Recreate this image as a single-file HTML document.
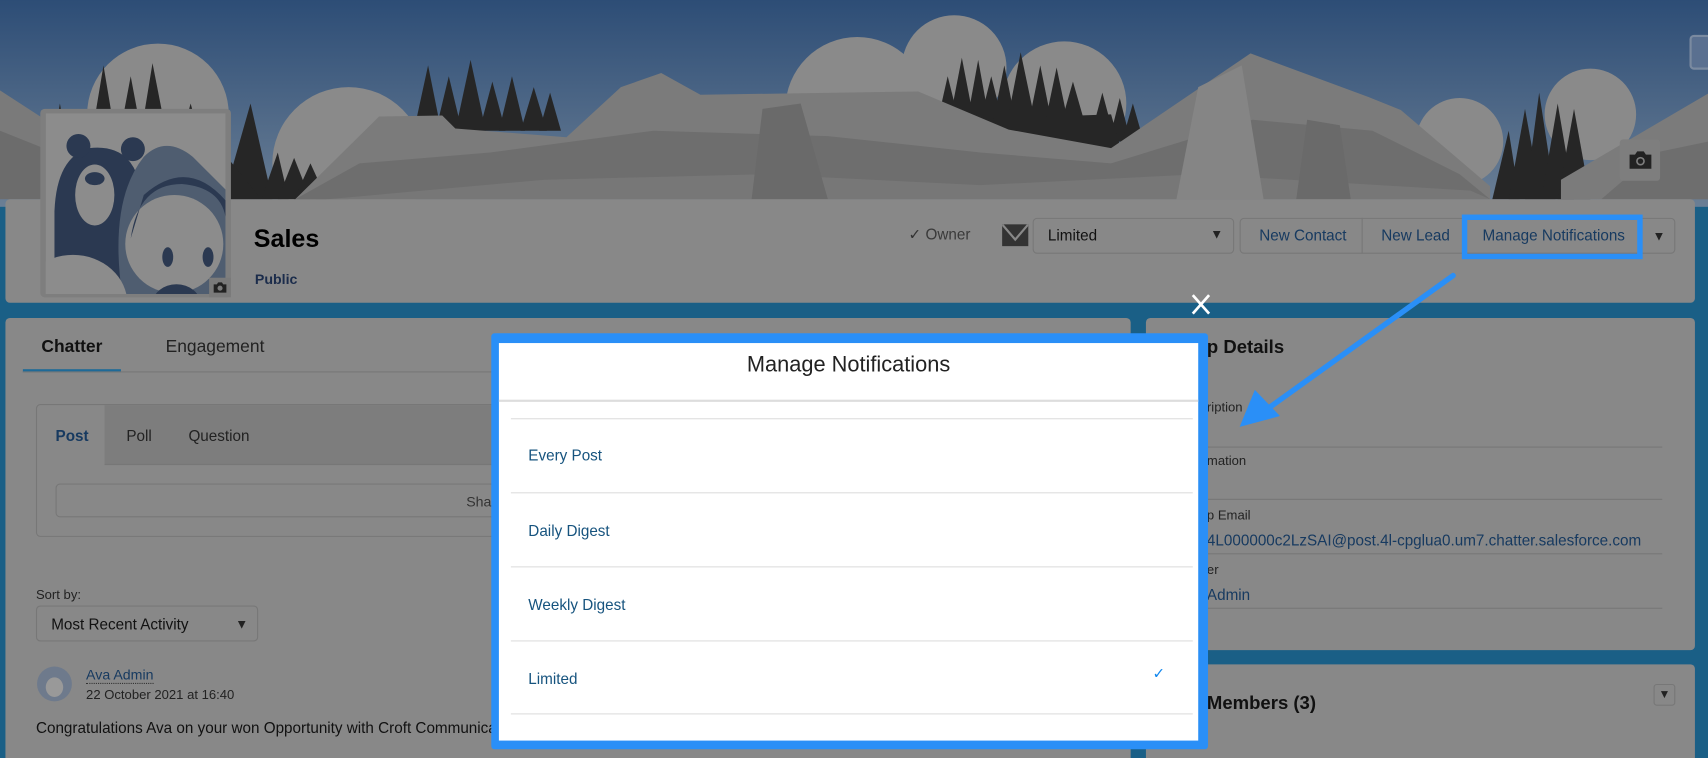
<!DOCTYPE html>
<html><head><meta charset="utf-8"><style>
html,body{margin:0;padding:0;width:1708px;height:758px;overflow:hidden;background:#1a5f86}
#w{position:absolute;left:0;top:0;width:1568px;height:696px;transform:scale(1.08929,1.08908);transform-origin:0 0;font-family:"Liberation Sans",sans-serif;background:#1a5f86;overflow:hidden}
.a{position:absolute}
.card{position:absolute;background:#888;border-radius:4px}
.t{position:absolute;white-space:nowrap}
</style></head><body><div id="w">
<svg class="a" style="left:0;top:0" width="1568" height="190" viewBox="0 0 1568 190">
<defs><linearGradient id="sky" x1="0" y1="0" x2="0" y2="1"><stop offset="0" stop-color="#2d4d76"/><stop offset="1" stop-color="#6b7f95"/></linearGradient></defs>
<rect width="1568" height="190" fill="url(#sky)"/>
<g fill="#8a8a8a">
<circle cx="145" cy="105" r="65"/><circle cx="320" cy="150" r="70"/>
<circle cx="787" cy="100" r="66"/><circle cx="876" cy="62" r="48"/><circle cx="977" cy="95" r="57"/>
<circle cx="1340" cy="130" r="40"/><circle cx="1460" cy="105" r="42"/>
</g>
<g fill="#262626">
<polygon points="45,150 55,95 65,150"/><polygon points="80,150 95,60 110,150"/><polygon points="105,150 120,70 135,150"/><polygon points="125,150 140,58 158,150"/><polygon points="160,150 175,95 190,150"/><polygon points="185,150 196,100 208,150"/>
<polygon points="205,183 230,95 250,183"/><polygon points="240,183 255,140 265,183"/><polygon points="255,183 270,145 285,183"/><polygon points="270,183 285,150 300,183"/><polygon points="290,183 305,150 320,183"/>
<polygon points="205,140 240,183 205,183"/>
<polygon points="380,120 393,60 405,120"/><polygon points="400,120 412,70 424,120"/><polygon points="418,120 432,55 446,120"/><polygon points="440,120 452,75 464,120"/><polygon points="458,120 470,70 482,120"/><polygon points="478,120 490,80 502,120"/><polygon points="495,120 505,85 515,120"/>
<polygon points="861,110 870,70 880,110"/><polygon points="872,110 883,53 894,110"/><polygon points="888,110 898,55 908,110"/><polygon points="900,110 910,70 920,110"/><polygon points="912,110 922,60 932,110"/><polygon points="925,110 937,48 950,110"/><polygon points="945,110 955,60 965,110"/><polygon points="960,110 970,62 980,110"/><polygon points="975,110 985,75 995,110"/><polygon points="1000,130 1012,85 1024,130"/><polygon points="1018,130 1028,90 1038,130"/><polygon points="1030,130 1040,95 1050,130"/>
<polygon points="880,110 1020,105 1030,140 930,125"/>
<polygon points="1370,183 1385,120 1395,183"/><polygon points="1385,183 1400,100 1415,183"/><polygon points="1400,183 1413,85 1428,183"/><polygon points="1415,183 1430,95 1445,183"/><polygon points="1430,183 1445,100 1460,183"/>
</g>
<polygon points="0,83 37,107 60,150 0,183" fill="#7a7a7a"/>
<polygon points="0,120 50,140 60,183 0,183" fill="#6c6c6c"/>
<polygon points="271,183 348,107 406,106 418,118 520,126 570,80 607,67 643,87 843,84 926,119 1020,136 1148,49 1256,89 1286,101 1368,171 1368,183" fill="#7b7b7b"/>
<polygon points="271,183 330,150 450,140 600,120 760,125 900,140 1020,150 1150,110 1260,120 1340,160 1368,183" fill="#6e6e6e"/>
<polygon points="300,183 500,165 700,160 900,170 1100,160 1350,175 1368,183" fill="#777"/>
<polygon points="690,183 700,100 735,95 760,183" fill="#6a6a6a"/>
<polygon points="1080,183 1100,80 1140,60 1160,183" fill="#858585"/>
<polygon points="1190,183 1200,110 1230,115 1240,183" fill="#6a6a6a"/>
<polygon points="1433,183 1433,165 1568,86 1568,183" fill="#7b7b7b"/>
<polygon points="1470,183 1520,140 1568,130 1568,183" fill="#6e6e6e"/>
</svg>
<div class="a" style="left:1551px;top:32px;width:20px;height:32px;background:#5a7090;border-radius:4px;border:2px solid #7a8aa0;box-sizing:border-box"></div>
<div class="a" style="left:1487px;top:128px;width:37px;height:38px;background:#7e7e7e;border-radius:3px"></div>
<svg class="a" style="left:1494px;top:137px" width="24" height="20" viewBox="0 0 24 20"><path d="M2,5 H7 L9,2 H15 L17,5 H22 V18 H2Z" fill="#222"/><circle cx="12" cy="11" r="4" fill="#7e7e7e"/><circle cx="12" cy="11" r="2.5" fill="#222"/></svg>
<div class="card" style="left:5px;top:183px;width:1551px;height:95px"></div>
<div class="a" style="left:37px;top:100px;width:175px;height:173px;background:#7e7e7e;border-radius:4px"></div>
<svg class="a" style="left:42px;top:104px" width="165" height="166" viewBox="0 0 165 166">
<rect width="165" height="166" fill="#8c8c8c"/>
<path d="M8,166 L8,90 Q10,40 40,32 Q75,28 85,60 L100,166Z" fill="#2b3951"/>
<circle cx="30" cy="30" r="11" fill="#2b3951"/><circle cx="80" cy="33" r="11" fill="#2b3951"/>
<ellipse cx="45" cy="75" rx="18" ry="28" fill="#8c8c8c"/>
<ellipse cx="45" cy="60" rx="9" ry="6" fill="#2b3951"/>
<path d="M70,166 Q58,80 90,40 Q110,20 135,40 L165,70 L165,166Z" fill="#4f5d70"/>
<circle cx="118" cy="120" r="45" fill="#8c8c8c"/>
<path d="M78,115 Q85,65 125,65 Q160,68 165,95 L165,80 Q130,40 90,75Z" fill="#2b3951"/>
<ellipse cx="112" cy="132" rx="5" ry="9" fill="#2b3951"/><ellipse cx="149" cy="132" rx="5" ry="9" fill="#2b3951"/>
<ellipse cx="25" cy="175" rx="50" ry="45" fill="#8c8c8c"/>
<ellipse cx="120" cy="175" rx="22" ry="18" fill="#2b3951"/>
</svg>
<div class="a" style="left:192px;top:255px;width:20px;height:18px;background:#7a7a7a"></div>
<svg class="a" style="left:195px;top:258px" width="14" height="12" viewBox="0 0 24 20"><path d="M2,5 H7 L9,2 H15 L17,5 H22 V18 H2Z" fill="#222"/><circle cx="12" cy="11" r="4" fill="#7a7a7a"/></svg>
<div class="t" style="left:233px;top:206px;font-size:23px;font-weight:bold;color:#000">Sales</div>
<div class="t" style="left:234px;top:249px;font-size:13px;font-weight:bold;color:#1b2c4b">Public</div>
<div class="t" style="left:834px;top:207px;font-size:14px;color:#333">✓ <span style="color:#3a3a3a">Owner</span></div>
<div class="a" style="left:920px;top:206px;width:24px;height:20px;background:#333"></div>
<svg class="a" style="left:920px;top:206px" width="24" height="20"><path d="M0,0 L12,14 L24,0" stroke="#888" stroke-width="2" fill="none"/></svg>
<div class="a" style="left:948px;top:200px;width:185px;height:33px;border:1px solid #777;border-radius:4px;box-sizing:border-box"></div>
<div class="t" style="left:962px;top:208px;font-size:14px;color:#111">Limited</div>
<div class="t" style="left:1111px;top:208px;font-size:12px;color:#222">▼</div>
<div class="a" style="left:1138px;top:200px;width:400px;height:33px;border:1px solid #777;border-radius:4px;box-sizing:border-box"></div>
<div class="a" style="left:1250px;top:200px;width:1px;height:33px;background:#777"></div>
<div class="t" style="left:1156px;top:208px;font-size:14px;color:#173a60">New Contact</div>
<div class="t" style="left:1268px;top:208px;font-size:14px;color:#173a60">New Lead</div>
<div class="t" style="left:1361px;top:208px;font-size:14px;color:#173a60">Manage Notifications</div>
<div class="t" style="left:1517px;top:210px;font-size:12px;color:#222">▼</div>
<div class="a" style="left:1342px;top:197px;width:166px;height:41px;border:5px solid #2a8ff7;box-sizing:border-box"></div>
<div class="card" style="left:5px;top:292px;width:1033px;height:420px"></div>
<div class="t" style="left:38px;top:310px;font-size:16px;font-weight:bold;color:#111">Chatter</div>
<div class="t" style="left:152px;top:310px;font-size:16px;color:#222">Engagement</div>
<div class="a" style="left:21px;top:339px;width:90px;height:3px;background:#1e6a98"></div>
<div class="a" style="left:21px;top:341px;width:440px;height:1px;background:#777"></div>
<div class="a" style="left:33px;top:371px;width:430px;height:122px;border:1px solid #777;border-radius:4px;box-sizing:border-box"></div>
<div class="a" style="left:96px;top:372px;width:365px;height:54px;background:#7d7d7d;border-bottom:1px solid #777"></div>
<div class="t" style="left:51px;top:392px;font-size:14px;font-weight:bold;color:#173a60">Post</div>
<div class="t" style="left:116px;top:392px;font-size:14px;color:#222">Poll</div>
<div class="t" style="left:173px;top:392px;font-size:14px;color:#222">Question</div>
<div class="a" style="left:51px;top:444px;width:420px;height:31px;border:1px solid #777;border-radius:4px;box-sizing:border-box"></div>
<div class="t" style="left:428px;top:453px;font-size:13px;color:#333">Sha</div>
<div class="t" style="left:33px;top:539px;font-size:12px;color:#222">Sort by:</div>
<div class="a" style="left:33px;top:556px;width:204px;height:33px;border:1px solid #777;border-radius:4px;box-sizing:border-box"></div>
<div class="t" style="left:47px;top:565px;font-size:14px;color:#111">Most Recent Activity</div>
<div class="t" style="left:216px;top:566px;font-size:12px;color:#222">▼</div>
<div class="a" style="left:34px;top:612px;width:32px;height:32px;border-radius:50%;background:#6e7a8c"></div>
<div class="a" style="left:42px;top:622px;width:16px;height:18px;border-radius:50%;background:#999"></div>
<div class="t" style="left:79px;top:612px;font-size:13px;color:#173a60;border-bottom:1px dotted #333">Ava Admin</div>
<div class="t" style="left:79px;top:631px;font-size:12px;color:#222">22 October 2021 at 16:40</div>
<div class="t" style="left:33px;top:660px;font-size:14px;color:#111">Congratulations Ava on your won Opportunity with Croft Communicat</div>
<div class="card" style="left:1052px;top:292px;width:504px;height:305px"></div>
<div class="t" style="left:1108px;top:309px;font-size:17px;font-weight:bold;color:#111">p Details</div>
<div class="t" style="left:1108px;top:367px;font-size:12px;color:#222">ription</div>
<div class="a" style="left:1108px;top:410px;width:418px;height:1px;background:#777"></div>
<div class="t" style="left:1108px;top:416px;font-size:12px;color:#222">mation</div>
<div class="a" style="left:1108px;top:458px;width:418px;height:1px;background:#777"></div>
<div class="t" style="left:1108px;top:466px;font-size:12px;color:#222">p Email</div>
<div class="t" style="left:1108px;top:488px;font-size:14px;color:#173a60">4L000000c2LzSAI@post.4l-cpglua0.um7.chatter.salesforce.com</div>
<div class="a" style="left:1108px;top:508px;width:418px;height:1px;background:#777"></div>
<div class="t" style="left:1108px;top:516px;font-size:12px;color:#222">er</div>
<div class="t" style="left:1108px;top:538px;font-size:14px;color:#173a60">Admin</div>
<div class="a" style="left:1108px;top:558px;width:418px;height:1px;background:#777"></div>
<div class="card" style="left:1052px;top:610px;width:504px;height:100px"></div>
<div class="t" style="left:1108px;top:636px;font-size:17px;font-weight:bold;color:#111">Members (3)</div>
<div class="a" style="left:1518px;top:628px;width:20px;height:20px;border:1px solid #777;border-radius:3px;box-sizing:border-box;font-size:11px;text-align:center;line-height:18px;color:#222">▼</div>
<svg class="a" style="left:0;top:0" width="1568" height="696"><line x1="1334" y1="253" x2="1160" y2="378" stroke="#2a8ff7" stroke-width="5" stroke-linecap="round"/><polygon points="1138,392 1152,358 1175,382" fill="#2a8ff7"/>
<path d="M1095,271 L1110,288 M1110,271 L1095,288" stroke="#fff" stroke-width="2.5"/></svg>
<div class="a" style="left:451px;top:306px;width:658px;height:382px;background:#2a8ff7;border-radius:3px"></div>
<div class="a" style="left:458px;top:315px;width:642px;height:365px;background:#fff"></div>
<div class="t" style="left:458px;top:324px;width:642px;text-align:center;font-size:20px;color:#222">Manage Notifications</div>
<div class="a" style="left:458px;top:367px;width:642px;height:2px;background:#ddd"></div>
<div class="a" style="left:469px;top:384px;width:626px;height:1px;background:#ddd"></div>
<div class="a" style="left:469px;top:452px;width:626px;height:1px;background:#ddd"></div>
<div class="a" style="left:469px;top:520px;width:626px;height:1px;background:#ddd"></div>
<div class="a" style="left:469px;top:588px;width:626px;height:1px;background:#ddd"></div>
<div class="a" style="left:469px;top:655px;width:626px;height:1px;background:#ddd"></div>
<div class="t" style="left:485px;top:410px;font-size:14px;color:#16537e">Every Post</div>
<div class="t" style="left:485px;top:479px;font-size:14px;color:#16537e">Daily Digest</div>
<div class="t" style="left:485px;top:547px;font-size:14px;color:#16537e">Weekly Digest</div>
<div class="t" style="left:485px;top:615px;font-size:14px;color:#16537e">Limited</div>
<div class="t" style="left:1058px;top:610px;font-size:14px;color:#1589ee">✓</div>
</div></body></html>
